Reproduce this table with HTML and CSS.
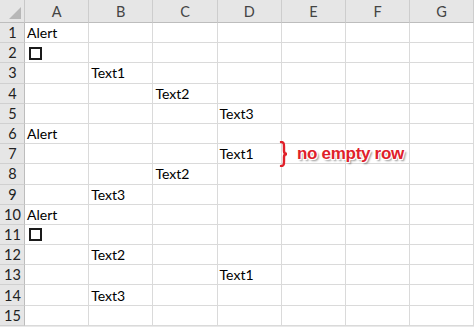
FILE: index.html
```html
<!DOCTYPE html>
<html lang="en">
<head>
  <meta charset="UTF-8" />
  <title>Sheet1</title>
  <link rel="stylesheet" href="styles.css">
</head>
<body>
  <div id="sheet">
    <div class="corner"><span class="corner-mark"></span></div>
    <div class="col-head">A</div>
    <div class="col-head">B</div>
    <div class="col-head">C</div>
    <div class="col-head">D</div>
    <div class="col-head">E</div>
    <div class="col-head">F</div>
    <div class="col-head">G</div>
  </div>

  <div id="note">
    <svg class="brace" width="10" height="26" viewBox="0 0 10 26">
      <path d="M2 1 C5 1 5 3 5 6 L5 10 C5 12 6 13 8 13 C6 13 5 14 5 16 L5 20 C5 23 5 25 2 25" fill="none" stroke="#e0202a" stroke-width="2.4" stroke-linecap="round"/>
    </svg>
    <span class="note-text">no empty row</span>
  </div>

  <script>
    // cell contents by row: [col index, text] ; "box" draws a form checkbox
    const rows = [
      [[0, "Alert"]],
      [[0, "box"]],
      [[1, "Text1"]],
      [[2, "Text2"]],
      [[3, "Text3"]],
      [[0, "Alert"]],
      [[3, "Text1"]],
      [[2, "Text2"]],
      [[1, "Text3"]],
      [[0, "Alert"]],
      [[0, "box"]],
      [[1, "Text2"]],
      [[3, "Text1"]],
      [[1, "Text3"]],
      []
    ];

    const sheet = document.getElementById("sheet");

    rows.forEach((cells, i) => {
      const head = document.createElement("div");
      head.className = "row-head";
      head.textContent = i + 1;
      sheet.appendChild(head);

      for (let c = 0; c < 7; c++) {
        const cell = document.createElement("div");
        cell.className = "cell";
        const hit = cells.find(x => x[0] === c);
        if (hit) {
          if (hit[1] === "box") {
            const box = document.createElement("span");
            box.className = "checkbox";
            cell.appendChild(box);
          } else {
            cell.textContent = hit[1];
          }
        }
        sheet.appendChild(cell);
      }
    });
  </script>
</body>
</html>
```

FILE: styles.css
```css
body {
  margin: 0;
  background-color: #fff;
  font-family: Lato, "Open Sans", sans-serif;
  overflow: hidden;
  position: relative;
  width: 474px;
  height: 327px;
}

#sheet {
  display: grid;
  grid-template-columns: 25px repeat(6, 64.2px) 1fr;
  grid-template-rows: 23px repeat(15, 20.2px);
  height: 327px;
  background-color: #e9e9e9;
}

.corner {
  background-color: #e6e6e6;
  border-right: 1px solid #c8c8c8;
  border-bottom: 1px solid #bdbdbd;
  position: relative;
}

.corner-mark {
  position: absolute;
  right: 3px;
  bottom: 3px;
  width: 0;
  height: 0;
  border-left: 12px solid transparent;
  border-bottom: 12px solid #b7b7b7;
}

.col-head {
  background-color: #e6e6e6;
  border-right: 1px solid #cdcdcd;
  border-bottom: 1px solid #bdbdbd;
  color: #444;
  font-size: 14.5px;
  display: flex;
  align-items: center;
  justify-content: center;
  padding-top: 1px;
}

.row-head {
  background-color: #e6e6e6;
  border-right: 1px solid #bdbdbd;
  border-bottom: 1px solid #d0d0d0;
  color: #222;
  font-size: 14.5px;
  display: flex;
  align-items: center;
  justify-content: center;
  padding-left: 1px;
}

.cell {
  background-color: #fff;
  border-right: 1px solid #dadada;
  border-bottom: 1px solid #dadada;
  color: #000;
  font-size: 14px;
  padding: 0 2px;
  display: flex;
  align-items: center;
  white-space: nowrap;
}

.checkbox {
  display: block;
  width: 9px;
  height: 9px;
  border: 2px solid #1a1a1a;
  margin-left: 2px;
  margin-top: 1px;
}

#note {
  position: absolute;
  left: 279px;
  top: 141px;
  display: flex;
  align-items: center;
  gap: 8px;
}

.note-text {
  font-family: "Liberation Sans", Arial, sans-serif;
  font-weight: bold;
  font-size: 17px;
  color: #e0202a;
  letter-spacing: -0.3px;
  text-shadow:
    -1px -1px 0 #fff, 1px -1px 0 #fff, -1px 1px 0 #fff, 1px 1px 0 #fff,
    2px 2px 2px rgba(0, 0, 0, 0.45);
}
```
